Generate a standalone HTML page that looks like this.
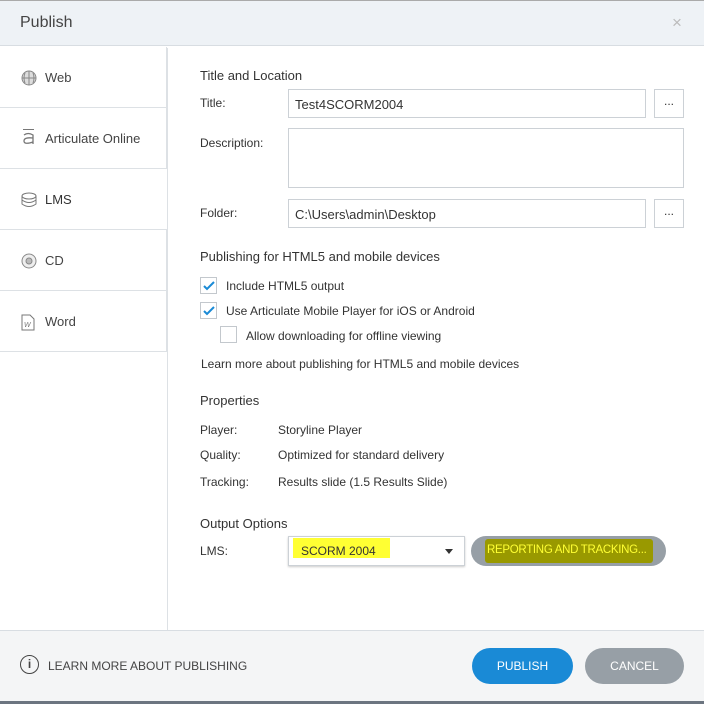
<!DOCTYPE html>
<html><head><style>
*{margin:0;padding:0;box-sizing:border-box}
body{width:704px;height:704px;position:relative;background:#fff;font-family:"Liberation Sans",sans-serif;color:#333;font-size:12px;overflow:hidden}
.a{position:absolute;white-space:nowrap}
.hdr{left:0;top:0;width:704px;height:46px;background:#eef2f6;border-bottom:1px solid #d8dde2;border-top:1px solid #aaa}
.tab{left:0;width:167px;height:61px;border-bottom:1px solid #dde1e5;border-right:1px solid #dde1e5}
.tab span{position:absolute;left:45px;top:23px;font-size:13px;color:#444}
.tab i{position:absolute;left:21px;top:23px}
.inp{border:1px solid #ccd1d6;background:#fff;height:29px;padding:7px 6px;font-size:13px;color:#333}
.btn3{border:1px solid #ccd1d6;width:30px;height:29px;text-align:center;font-size:12px;line-height:22px;color:#333}
.h{font-size:13px;color:#333}
.cb{width:17px;height:17px;border:1px solid #c3c8cd;background:#fff}
.cb svg{position:absolute;left:2px;top:3px}
.pill{border-radius:18px;color:#fff;text-align:center;font-size:12px}
</style></head><body>
<div class="a hdr"><span class="a" style="left:20px;top:13px;font-size:16px;color:#444">Publish</span><span class="a" style="left:672px;top:12px;font-size:17px;color:#bbb">×</span></div>
<div class="a" style="left:167px;top:48px;width:1px;height:582px;background:#dde1e5"></div>
<div class="a tab" style="top:47px"><i><svg width="16" height="16"><circle cx="8" cy="8" r="7" fill="#ddd" stroke="#888"/><path d="M8 1v14M1 8h14M4 3q-2 5 0 10M12 3q2 5 0 10" stroke="#888" fill="none"/></svg></i><span>Web</span></div>
<div class="a tab" style="top:108px"><i><svg width="16" height="18" style="position:absolute;top:-3px"><path d="M2 1.5h11" stroke="#777"/><path d="M3 7q4-3 9 0v9M12 10q-9-1-9 3q0 4 9 1" fill="none" stroke="#777" stroke-width="1.3"/></svg></i><span>Articulate Online</span></div>
<div class="a tab" style="top:169px;border-right:none"><i><svg width="16" height="16"><ellipse cx="8" cy="4" rx="7" ry="3" fill="none" stroke="#777"/><path d="M1 4v8q7 5 14 0V4M1 8q7 5 14 0" fill="none" stroke="#777"/></svg></i><span style="color:#333">LMS</span></div>
<div class="a tab" style="top:230px"><i><svg width="16" height="16"><circle cx="8" cy="8" r="7" fill="#eee" stroke="#888"/><circle cx="8" cy="8" r="3" fill="#bbb" stroke="#888"/></svg></i><span>CD</span></div>
<div class="a tab" style="top:291px"><i><svg width="14" height="17"><path d="M1 1h8l4 4v11H1z" fill="#fff" stroke="#777"/><text x="3" y="13" font-size="7" fill="#777">W</text></svg></i><span>Word</span></div>

<div class="a h" style="left:200px;top:68px">Title and Location</div>
<div class="a" style="left:200px;top:96px">Title:</div>
<div class="a inp" style="left:288px;top:89px;width:358px">Test4SCORM2004</div>
<div class="a btn3" style="left:654px;top:89px">...</div>
<div class="a" style="left:200px;top:136px">Description:</div>
<div class="a inp" style="left:288px;top:128px;width:396px;height:60px"></div>
<div class="a" style="left:200px;top:206px">Folder:</div>
<div class="a inp" style="left:288px;top:199px;width:358px">C:\Users\admin\Desktop</div>
<div class="a btn3" style="left:654px;top:199px">...</div>

<div class="a h" style="left:200px;top:249px">Publishing for HTML5 and mobile devices</div>
<div class="a cb" style="left:200px;top:277px"><svg width="12" height="10"><path d="M1 5l3 3 7-7" stroke="#1a8ad6" stroke-width="2" fill="none"/></svg></div>
<div class="a" style="left:226px;top:279px">Include HTML5 output</div>
<div class="a cb" style="left:200px;top:302px"><svg width="12" height="10"><path d="M1 5l3 3 7-7" stroke="#1a8ad6" stroke-width="2" fill="none"/></svg></div>
<div class="a" style="left:226px;top:304px">Use Articulate Mobile Player for iOS or Android</div>
<div class="a cb" style="left:220px;top:326px"></div>
<div class="a" style="left:246px;top:329px">Allow downloading for offline viewing</div>
<div class="a" style="left:201px;top:357px">Learn more about publishing for HTML5 and mobile devices</div>

<div class="a h" style="left:200px;top:393px">Properties</div>
<div class="a" style="left:200px;top:423px">Player:</div><div class="a" style="left:278px;top:423px">Storyline Player</div>
<div class="a" style="left:200px;top:448px">Quality:</div><div class="a" style="left:278px;top:448px">Optimized for standard delivery</div>
<div class="a" style="left:200px;top:475px">Tracking:</div><div class="a" style="left:278px;top:475px">Results slide (1.5 Results Slide)</div>

<div class="a h" style="left:200px;top:516px">Output Options</div>
<div class="a" style="left:200px;top:544px">LMS:</div>
<div class="a" style="left:288px;top:536px;width:177px;height:30px;border:1px solid #ccd1d6;box-shadow:0 1px 2px #ccc"></div>
<div class="a" style="left:293px;top:538px;width:97px;height:20px;background:#ffff33"></div>
<div class="a" style="left:301px;top:544px;font-size:12px">SCORM 2004</div>
<div class="a" style="left:445px;top:549px;border:4px solid transparent;border-top:5px solid #333"></div>
<div class="a pill" style="left:471px;top:536px;width:195px;height:30px;background:#979fa6"></div>
<div class="a" style="left:485px;top:539px;width:168px;height:24px;background:#999900;border-radius:3px"></div>
<div class="a" style="left:487px;top:544px;font-size:11.5px;letter-spacing:-0.3px;color:#ffff33">REPORTING AND TRACKING...</div>

<div class="a" style="left:0;top:630px;width:704px;height:74px;background:#f4f5f6;border-top:1px solid #d8dde2"></div>
<div class="a" style="left:0;top:701px;width:704px;height:3px;background:#6c7580"></div>
<div class="a" style="left:20px;top:655px;width:19px;height:19px;border:1.5px solid #444;border-radius:50%;text-align:center;font-size:12px;line-height:16px;font-weight:bold;color:#444">i</div>
<div class="a" style="left:48px;top:659px;color:#444">LEARN MORE ABOUT PUBLISHING</div>
<div class="a pill" style="left:472px;top:648px;width:101px;height:36px;line-height:36px;background:#1a8ad6">PUBLISH</div>
<div class="a pill" style="left:585px;top:648px;width:99px;height:36px;line-height:36px;background:#979fa6">CANCEL</div>
</body></html>
